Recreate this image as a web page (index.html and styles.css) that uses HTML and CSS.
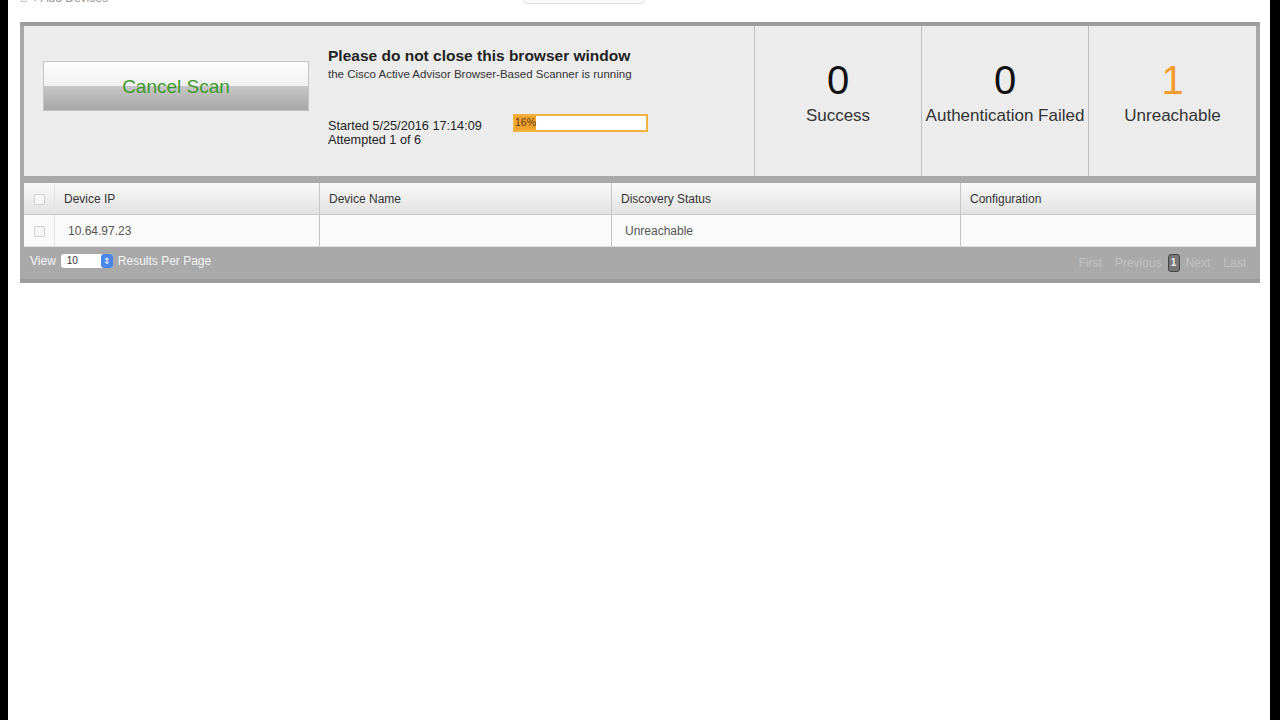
FILE: index.html
```html
<!DOCTYPE html>
<html>

<head>
  <meta charset="utf-8">
  <title>Browser-Based Scanner</title>
  <link rel="stylesheet" href="styles.css">
</head>

<body>
  <div id="screen">
    <div id="topbar">
      <span class="crumb">&#8962; &nbsp;&#8250; Add Devices</span>
      <span class="topBtn"></span>
    </div>

    <div id="scan">
      <div id="summary">
        <div class="cancelCell">
          <button id="cancel">Cancel Scan</button>
        </div>
        <div class="info">
          <div class="infoTitle">Please do not close this browser window</div>
          <div class="infoSub">the Cisco Active Advisor Browser-Based Scanner is running</div>
          <div class="progressRow">
            <div class="times">
              <div>Started 5/25/2016 17:14:09</div>
              <div>Attempted 1 of 6</div>
            </div>
            <div class="progress">
              <div class="progressFill" style="width: 16%">16%</div>
            </div>
          </div>
        </div>
        <div class="stat">
          <div class="statNum">0</div>
          <div class="statLabel">Success</div>
        </div>
        <div class="stat">
          <div class="statNum">0</div>
          <div class="statLabel">Authentication Failed</div>
        </div>
        <div class="stat">
          <div class="statNum orange">1</div>
          <div class="statLabel">Unreachable</div>
        </div>
      </div>

      <div id="devices">
        <div class="devRow head">
          <div class="cell chk"><span class="box"></span></div>
          <div class="cell ip">Device IP</div>
          <div class="cell name">Device Name</div>
          <div class="cell status">Discovery Status</div>
          <div class="cell conf">Configuration</div>
        </div>
        <div class="devRow">
          <div class="cell chk"><span class="box"></span></div>
          <div class="cell ip light">10.64.97.23</div>
          <div class="cell name"></div>
          <div class="cell status light">Unreachable</div>
          <div class="cell conf"></div>
        </div>
      </div>

      <div id="pager">
        <div class="perPage">
          View
          <span class="select">10<span class="spin">&#8661;</span></span>
          Results Per Page
        </div>
        <div class="pages">
          <span>First</span>
          <span>Previous</span>
          <span class="current">1</span>
          <span>Next</span>
          <span>Last</span>
        </div>
      </div>
    </div>
  </div>
</body>

</html>
```

FILE: styles.css
```css
html,
body {
  margin: 0;
  height: 100%;
  background-color: #000;
  font-family: "Liberation Sans", Arial, sans-serif;
}

#screen {
  margin-left: 8px;
  width: 1262px;
  height: 720px;
  background-color: #fff;
  overflow: hidden;
}

#topbar {
  height: 22px;
  display: flex;
  align-items: flex-start;
  font-size: 12px;
  color: #999;
}

.crumb {
  margin: -9px 0 0 12px;
  width: 120px;
}

.topBtn {
  margin-left: 383px;
  margin-top: -20px;
  width: 120px;
  height: 22px;
  border: 1px solid #ddd;
  border-radius: 4px;
  background-color: #fafafa;
}

#scan {
  margin: 0 10px 0 12px;
  background-color: #a9a9a9;
  border-top: 4px solid #9c9c9c;
  border-bottom: 4px solid #9c9c9c;
  padding: 0 4px;
}

#summary {
  display: flex;
  height: 150px;
  background-color: #ececec;
}

.cancelCell {
  width: 283px;
  box-sizing: border-box;
  padding: 35px 0 0 19px;
}

#cancel {
  width: 266px;
  height: 50px;
  border: 1px solid #c5c5c5;
  background: linear-gradient(#fefefe, #f0f0f0 50%, #c6c6c6 51%, #a7a7a7);
  color: #3e9a2c;
  font: inherit;
  font-size: 19px;
  padding-top: 2px;
  cursor: pointer;
}

.info {
  width: 448px;
  padding: 21px 0 0 21px;
  box-sizing: border-box;
  border-right: 1px solid #bdbdbd;
}

.infoTitle {
  font-size: 15.5px;
  font-weight: bold;
  color: #222;
}

.infoSub {
  font-size: 11.5px;
  color: #333;
  margin-top: 3px;
}

.progressRow {
  display: flex;
  margin-top: 34px;
}

.times {
  font-size: 12.7px;
  color: #222;
  line-height: 14px;
  width: 185px;
  padding-top: 5px;
}

.progress {
  width: 131px;
  height: 14px;
  border: 2px solid #f1b23e;
  background-color: #fff;
}

.progressFill {
  height: 100%;
  background-color: #f3a22b;
  font-size: 10.5px;
  line-height: 13px;
  color: #5a3a10;
  overflow: visible;
  white-space: nowrap;
}

.stat {
  width: 167px;
  text-align: center;
  border-right: 1px solid #bdbdbd;
  padding-top: 32px;
  box-sizing: border-box;
}

.stat:last-child {
  border-right: none;
  flex-grow: 1;
}

.statNum {
  font-size: 40px;
  line-height: 44px;
  color: #111;
}

.orange {
  color: #f39c2f;
}

.statLabel {
  font-size: 17px;
  color: #333;
  margin-top: 4px;
}

#devices {
  margin-top: 7px;
}

.devRow {
  display: flex;
  height: 31px;
  background-color: #fafafa;
  border-bottom: 1px solid #ddd;
}

.devRow.head {
  height: 31px;
  background: linear-gradient(#f9f9f9, #e2e2e2);
  border-bottom: 1px solid #c8c8c8;
}

.cell {
  box-sizing: border-box;
  font-size: 12px;
  color: #333;
  display: flex;
  align-items: center;
  padding-left: 9px;
  padding-top: 1px;
  border-right: 1px solid #c5c5c5;
}

.cell.light {
  color: #555;
  padding-left: 13px;
}

.cell.chk {
  width: 31px;
  justify-content: center;
  padding-left: 0;
  border-right: 1px solid #e4e4e4;
}

.box {
  width: 9px;
  height: 9px;
  border: 1px solid #d0d0d0;
  border-radius: 2px;
  background-color: #f6f6f6;
}

.cell.ip {
  width: 265px;
}

.cell.name {
  width: 292px;
}

.cell.status {
  width: 349px;
}

.cell.conf {
  flex-grow: 1;
  border-right: none;
}

#pager {
  height: 32px;
  display: flex;
  justify-content: space-between;
  align-items: center;
  font-size: 12px;
}

.perPage {
  color: #f4f4f4;
  display: flex;
  align-items: center;
  gap: 4px;
  margin-top: -5px;
  margin-left: 6px;
}

.select {
  position: relative;
  width: 34px;
  height: 14px;
  background-color: #fff;
  border-radius: 3px;
  color: #333;
  font-size: 10px;
  line-height: 14px;
  padding: 0 12px 0 6px;
  margin: 0 1px;
}

.spin {
  position: absolute;
  right: 0;
  top: 0;
  width: 12px;
  height: 14px;
  border-radius: 3px;
  background-color: #4a86e8;
  color: #fff;
  font-size: 9px;
  text-align: center;
}

.pages {
  display: flex;
  align-items: center;
  gap: 13px;
  color: #c2c2c2;
  margin-right: 10px;
  margin-top: 0;
}

.current {
  width: 10px;
  height: 16px;
  line-height: 16px;
  text-align: center;
  background-color: #777;
  border: 1px solid #444;
  border-radius: 3px;
  color: #eee;
  font-weight: bold;
  font-size: 10px;
  margin: 0 -7px;
}
```
